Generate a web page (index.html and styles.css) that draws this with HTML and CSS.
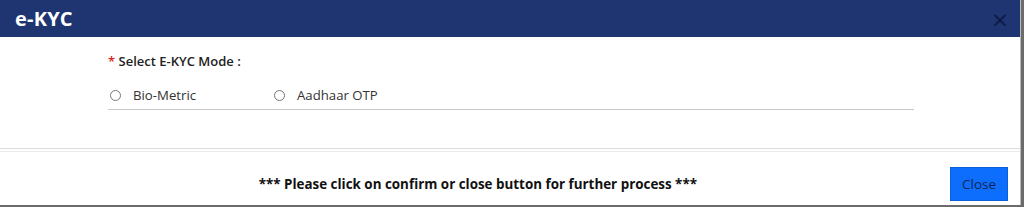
FILE: index.html
```html
<!DOCTYPE html>
<html>
<head>
<meta charset="utf-8">
<link rel="stylesheet" href="styles.css">
</head>
<body>
<div class="modal">
  <div class="modal-header">
    <h2 class="title">e-KYC</h2>
    <span class="close-x">&times;</span>
  </div>
  <div class="modal-body">
    <div class="field">
      <div class="label"><span class="req">*</span> Select E-KYC Mode :</div>
      <div class="options">
        <label class="opt opt-first"><span class="radio"></span>Bio-Metric</label>
        <label class="opt"><span class="radio"></span>Aadhaar OTP</label>
      </div>
    </div>
  </div>
  <div class="modal-footer">
    <div class="note">*** Please click on confirm or close button for further process ***</div>
    <button class="btn-close">Close</button>
  </div>
</div>
</body>
</html>
```

FILE: styles.css
```css
html, body {
  margin: 0;
  padding: 0;
  background: #6b6b6b;
}
body {
  font-family: "Open Sans", "Noto Sans", sans-serif;
  width: 1024px;
  height: 207px;
  overflow: hidden;
}
.modal {
  width: 1020px;
  height: 205px;
  background: #fff;
  border-right: 1px solid #bdbdbd;
  display: flex;
  flex-direction: column;
}
.modal-header {
  height: 37px;
  background: #1e3572;
  display: flex;
  align-items: center;
  justify-content: space-between;
  padding: 0 12px 0 15px;
  box-sizing: border-box;
}
.title {
  margin: 0;
  color: #fff;
  font-size: 20px;
  font-weight: 700;
  letter-spacing: 0.2px;
}
.close-x {
  color: #0c1a45;
  font-size: 28px;
  font-weight: 400;
  line-height: 1;
}
.modal-body {
  height: 112px;
  border-bottom: 1px solid #dcdcdc;
  box-sizing: border-box;
  padding: 15px 0 0 108px;
  position: relative;
}
.modal-body::after {
  content: "";
  position: absolute;
  left: 0;
  right: 0;
  bottom: -4px;
  height: 1px;
  background: #ececec;
}
.field {
  width: 806px;
}
.label {
  font-size: 13px;
  font-weight: 600;
  color: #222;
  height: 18px;
  line-height: 18px;
}
.req {
  color: #d22;
}
.options {
  display: flex;
  align-items: center;
  margin-top: 16px;
  padding-bottom: 5px;
  border-bottom: 1px solid #c8c8c8;
}
.opt {
  display: flex;
  align-items: center;
  font-size: 13.2px;
  color: #333;
  line-height: 18px;
}
.opt-first {
  width: 164px;
}
.radio {
  width: 9px;
  height: 9px;
  border: 1px solid #777;
  border-radius: 50%;
  margin: 0 12px 0 2px;
}
.modal-footer {
  flex: 1;
  display: flex;
  align-items: center;
  justify-content: flex-end;
  padding: 14px 12px 0 0;
  box-sizing: border-box;
}
.note {
  font-size: 13.4px;
  font-weight: 700;
  color: #111;
  margin-right: 253px;
}
.btn-close {
  width: 58px;
  height: 34px;
  background: #0d6efd;
  border: 1px solid #0a5ed8;
  color: #0f2558;
  font-family: inherit;
  font-size: 13.5px;
  padding: 0;
}
```
